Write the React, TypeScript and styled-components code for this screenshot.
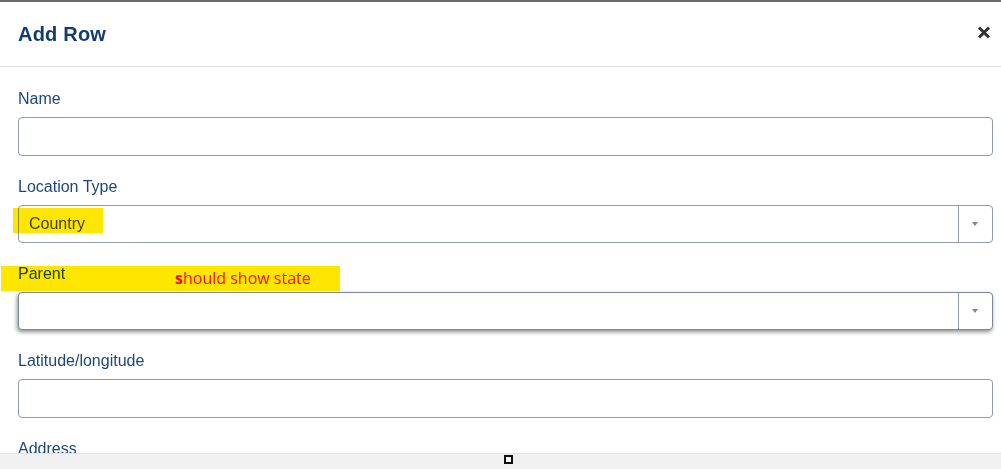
import React, { FC } from 'react';
import styled, { createGlobalStyle } from 'styled-components';

const GlobalStyle = createGlobalStyle`
	html, body {
		margin: 0;
		padding: 0;
		height: 469px;
		overflow: hidden;
		background: #ffffff;
		font-family: 'Liberation Sans', Arial, sans-serif;
	}
	#root {
		height: 100%;
	}
`;

type FieldKind = 'text' | 'select';

interface FieldDef {
	label: string;
	kind: FieldKind;
	value?: string;
	focused?: boolean;
}

const fields: FieldDef[] = [
	{ label: 'Name', kind: 'text' },
	{ label: 'Location Type', kind: 'select', value: 'Country' },
	{ label: 'Parent', kind: 'select', focused: true },
	{ label: 'Latitude/longitude', kind: 'text' },
	{ label: 'Address', kind: 'text' },
];

const CloseIcon: FC = () => (
	<svg width="14" height="13" viewBox="0 0 14 13">
		<path d="M2 1.5 L12 11.5 M12 1.5 L2 11.5" stroke="#333" strokeWidth="3" strokeLinecap="butt" />
	</svg>
);

const Field: FC<{ field: FieldDef }> = ({ field }) => (
	<FieldGroup>
		{field.label === 'Parent' && (
			<ParentNote>
				<NoteText>
					<b>s</b>hould show state
				</NoteText>
			</ParentNote>
		)}
		<Label>{field.label}</Label>
		{field.kind === 'text' ? (
			<TextBox />
		) : (
			<SelectBox $focused={field.focused}>
				<SelectValue>{field.value}</SelectValue>
				<ArrowCell>
					<Caret />
				</ArrowCell>
				{field.value && <ValueMark />}
			</SelectBox>
		)}
	</FieldGroup>
);

const App: FC = () => (
	<>
		<GlobalStyle />
		<Page>
			<Backdrop />
			<Header>
				<Title>Add Row</Title>
				<CloseButton>
					<CloseIcon />
				</CloseButton>
			</Header>
			<Body>
				{fields.map((f) => (
					<Field key={f.label} field={f} />
				))}
			</Body>
			<BottomBar>
				<Handle />
			</BottomBar>
		</Page>
	</>
);

export default App;

const Page = styled.div`
	display: flex;
	flex-direction: column;
	height: 469px;
	overflow: hidden;
`;

const Backdrop = styled.div`
	height: 2px;
	flex: 0 0 2px;
	background: #6b6b6b;
`;

const Header = styled.div`
	display: flex;
	align-items: center;
	justify-content: space-between;
	height: 64px;
	flex: 0 0 64px;
	padding: 0 10px 0 18px;
	border-bottom: 1px solid #e2e2e2;
`;

const Title = styled.h1`
	margin: 0;
	font-size: 20px;
	line-height: 24px;
	font-weight: 700;
	color: #123d6e;
	letter-spacing: 0.2px;
`;

const CloseButton = styled.div`
	display: flex;
	margin-top: -3px;
`;

const Body = styled.div`
	flex: 1;
	overflow: hidden;
	padding: 22px 8px 0 18px;
`;

const FieldGroup = styled.div`
	position: relative;
	margin-bottom: 21px;
`;

const Label = styled.div`
	position: relative;
	font-size: 16px;
	line-height: 20px;
	color: #1d4777;
	margin-bottom: 8px;
`;

const TextBox = styled.div`
	height: 37px;
	border: 1px solid #8f9bab;
	border-radius: 4px;
	background: #fff;
`;

const SelectBox = styled.div<{ $focused?: boolean }>`
	position: relative;
	display: flex;
	height: 36px;
	border: 1px solid ${(p) => (p.$focused ? '#7c8897' : '#8f9bab')};
	border-radius: 4px;
	background: #fff;
	box-shadow: ${(p) => (p.$focused ? '-1px 2px 4px rgba(0, 0, 0, 0.45)' : 'none')};
`;

const SelectValue = styled.div`
	flex: 1;
	display: flex;
	align-items: center;
	padding-left: 10px;
	font-size: 16px;
	color: #444;
`;

const ArrowCell = styled.div`
	display: flex;
	align-items: center;
	justify-content: center;
	width: 33px;
	border-left: 1px solid #8f9bab;
`;

const Caret = styled.span`
	width: 0;
	height: 0;
	border-left: 3px solid transparent;
	border-right: 3px solid transparent;
	border-top: 4px solid #888;
	margin-left: -1px;
`;

/* annotation highlights painted over the form */
const ValueMark = styled.div`
	position: absolute;
	left: -6px;
	top: 2px;
	width: 90px;
	height: 25px;
	background: #ffe600;
	mix-blend-mode: multiply;
`;

const ParentNote = styled.div`
	position: absolute;
	left: -17px;
	top: 2px;
	width: 339px;
	height: 25px;
	background: #ffe600;
	mix-blend-mode: multiply;
	z-index: 1;
`;

const NoteText = styled.span`
	display: block;
	margin: 2px 0 0 174px;
	font-family: 'Open Sans', sans-serif;
	font-size: 16px;
	line-height: 20px;
	color: #e8131b;

	b {
		font-weight: 700;
	}
`;

const BottomBar = styled.div`
	display: flex;
	justify-content: center;
	flex: 0 0 15px;
	height: 15px;
	background: #f0f0f0;
	border-top: 1px solid #e4e4e4;
	padding-left: 16px;
`;

const Handle = styled.div`
	width: 5px;
	height: 5px;
	margin-top: 1px;
	border: 2px solid #111;
	background: #fff;
`;
